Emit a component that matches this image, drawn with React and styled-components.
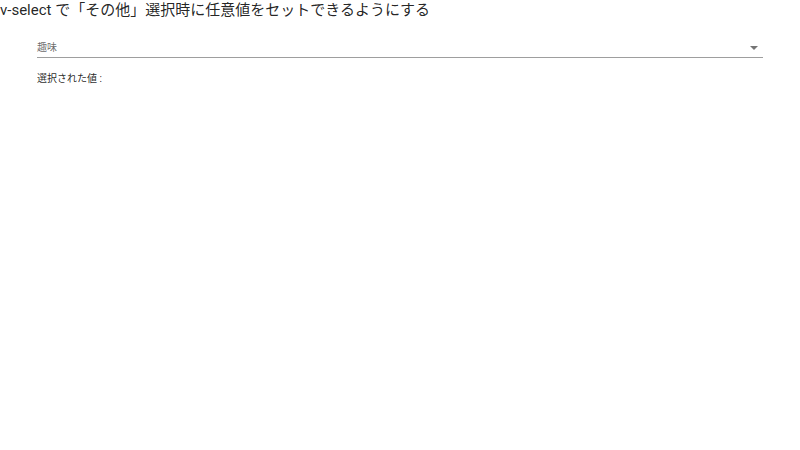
import styled, { createGlobalStyle } from 'styled-components';

const GlobalStyle = createGlobalStyle`
  body {
    margin: 0;
    background: #fff;
    font-family: Roboto, "Noto Sans CJK JP", sans-serif;
    color: rgba(0, 0, 0, 0.87);
  }
`;

const Title = styled.h1`
  margin: 0;
  padding-top: 1px;
  font-size: 15px;
  font-weight: 400;
  line-height: 18px;
`;

const Container = styled.div`
  padding: 18px 37px 0 37px;
`;

const SelectField = styled.div`
  display: flex;
  align-items: center;
  height: 20px;
  border-bottom: 1px solid rgba(0, 0, 0, 0.38);
`;

const Label = styled.span`
  flex: 1;
  padding-top: 2px;
  font-size: 10px;
  color: rgba(0, 0, 0, 0.6);
  line-height: 18px;
`;

const Arrow = styled.span`
  width: 0;
  height: 0;
  margin: 2px 5px 0 0;
  border-left: 4px solid transparent;
  border-right: 4px solid transparent;
  border-top: 4px solid rgba(0, 0, 0, 0.54);
`;

const Result = styled.p`
  margin: 14px 0 0;
  font-size: 10px;
  line-height: 14px;
`;

export default function App() {
  return (
    <>
      <GlobalStyle />
      <Title>v-select で「その他」選択時に任意値をセットできるようにする</Title>
      <Container>
        <SelectField>
          <Label>趣味</Label>
          <Arrow />
        </SelectField>
        <Result>選択された値 :</Result>
      </Container>
    </>
  );
}
